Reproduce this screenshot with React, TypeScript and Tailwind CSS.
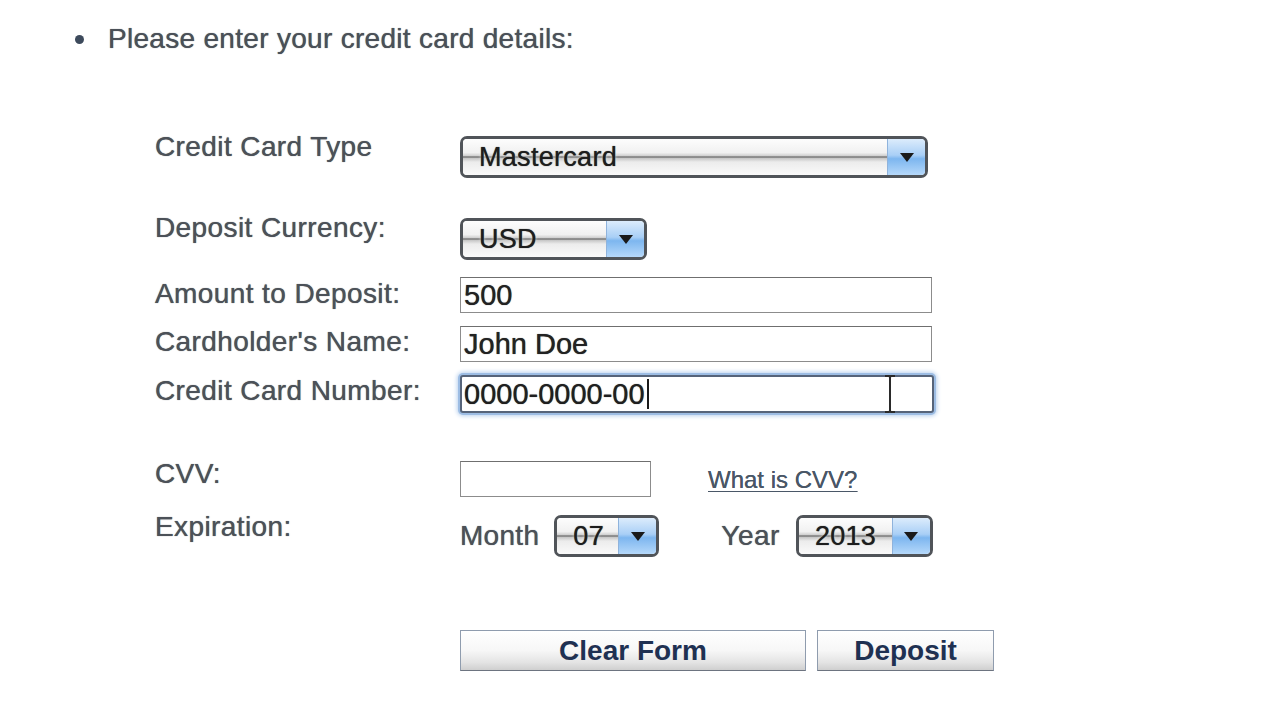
import React from "react";

const labelCls =
  "w-[305px] shrink-0 text-[28px] leading-none tracking-[0.4px] text-[#4c5158] [text-shadow:0_0_0.8px_rgba(60,65,72,0.9)]";

interface AquaSelectProps {
  value: string;
  widthCls: string;
  textPad?: string;
}

// Old Mac "Aqua" style popup: grey glossy body with a blue arrow cap
function AquaSelect({ value, widthCls, textPad = "pl-[15px]" }: AquaSelectProps) {
  return (
    <div
      className={`flex h-[42px] shrink-0 overflow-hidden rounded-[7px] border-[3px] border-[#505459] ${widthCls}`}
    >
      <div
        className={`flex flex-1 items-center bg-[linear-gradient(to_bottom,#fdfdfd_0%,#f1f1f1_38%,#d2d2d2_46%,#6e6e6e_50%,#c8c8c8_54%,#ececec_64%,#fafafa_100%)] ${textPad}`}
      >
        <span className="text-[27px] leading-none tracking-[0.3px] text-[#1d1d1d] [text-shadow:0_0_1px_#333,0_0_3px_#fff]">
          {value}
        </span>
      </div>
      <div className="flex w-[38px] items-center justify-center border-l border-[#8fb3dc] bg-[linear-gradient(to_bottom,#dcecfc_0%,#a9cff6_45%,#7db6ef_55%,#b5d8fa_100%)]">
        <svg width="14" height="9" viewBox="0 0 14 9">
          <path d="M0 0 H14 L7 9 Z" fill="#1a1a1a" />
        </svg>
      </div>
    </div>
  );
}

interface TextFieldProps {
  value?: string;
  widthCls: string;
  focused?: boolean;
}

function TextField({ value = "", widthCls, focused }: TextFieldProps) {
  if (focused) {
    return (
      <div
        className={`relative flex h-[38px] shrink-0 items-center rounded-[3px] border-2 border-[#56647a] bg-white pl-[2px] shadow-[0_0_0_2px_#9dbde4,0_0_4px_3px_#b9d1ee] ${widthCls}`}
      >
        <span className="text-[29px] leading-none text-[#1f1f1f] [text-shadow:0_0_0.8px_#333]">
          {value}
        </span>
        <span className="ml-[2px] h-[30px] w-[2px] bg-[#1a1a1a]" />
        {/* I-beam mouse pointer */}
        <svg
          className="absolute left-[421px] top-[-3px]"
          width="14"
          height="40"
          viewBox="0 0 14 40"
        >
          <path
            d="M2 2 H6 L7 3 L8 2 H12 M7 3 V37 M2 38 H6 L7 37 L8 38 H12"
            stroke="#2a2a2a"
            strokeWidth="2"
            fill="none"
          />
        </svg>
      </div>
    );
  }
  return (
    <div
      className={`flex h-[36px] shrink-0 items-center border border-[#8c8c8c] border-t-[#6f6f6f] bg-white pl-[3px] ${widthCls}`}
    >
      <span className="text-[29px] leading-none text-[#222] [text-shadow:0_0_0.8px_#333]">
        {value}
      </span>
    </div>
  );
}

function FormButton({ children, widthCls }: { children: React.ReactNode; widthCls: string }) {
  return (
    <button
      className={`flex h-[41px] items-center justify-center border border-[#8f9cae] border-b-[#6d7480] bg-[linear-gradient(to_bottom,#ffffff_0%,#f7f7f7_50%,#e4e4e4_80%,#cfcfcf_100%)] text-[28px] font-bold leading-none text-[#1f3152] ${widthCls}`}
    >
      {children}
    </button>
  );
}

export default function App() {
  return (
    <div className="min-h-[720px] w-[1280px] bg-white font-['Liberation_Sans',Arial,sans-serif]">
      {/* heading */}
      <div className="flex items-center pl-[75px] pt-[25px]">
        <span className="h-[9px] w-[9px] rounded-full bg-[#3d4a5c]" />
        <span className="ml-[24px] text-[28px] leading-none tracking-[0.3px] text-[#4a5058] [text-shadow:0_0_0.8px_rgba(60,65,72,0.9)]">
          Please enter your credit card details:
        </span>
      </div>

      <div className="mt-[80px] flex flex-col pl-[155px]">
        {/* card type */}
        <div className="flex h-[81px] items-start">
          <div className={labelCls}>Credit Card Type</div>
          <div className="mt-[3px]">
            <AquaSelect value="Mastercard" widthCls="w-[468px]" textPad="pl-[16px]" />
          </div>
        </div>

        {/* currency */}
        <div className="flex h-[63px] items-start">
          <div className={labelCls}>Deposit Currency:</div>
          <div className="mt-[4px]">
            <AquaSelect value="USD" widthCls="w-[187px]" textPad="pl-[16px]" />
          </div>
        </div>

        <div className="flex h-[49px] items-start">
          <div className={`${labelCls} mt-[3px]`}>Amount to Deposit:</div>
          <TextField value="500" widthCls="w-[472px]" />
        </div>

        <div className="flex h-[47px] items-start">
          <div className={`${labelCls} mt-[2px]`}>Cardholder's Name:</div>
          <TextField value="John Doe" widthCls="w-[472px]" />
        </div>

        <div className="flex h-[87px] items-start">
          <div className={`${labelCls} mt-[4px]`}>Credit Card Number:</div>
          <div className="mt-[2px]">
            <TextField value="0000-0000-00" widthCls="w-[474px]" focused />
          </div>
        </div>

        {/* cvv */}
        <div className="flex h-[53px] items-start">
          <div className={labelCls}>CVV:</div>
          <div className="mt-[1px] flex items-center">
            <TextField widthCls="w-[191px]" />
            <a
              href="#"
              className="ml-[57px] mt-[2px] text-[24px] leading-none text-[#4a5767] underline decoration-1 underline-offset-[3px] [text-shadow:0_0_0.6px_#4a5767]"
            >
              What is CVV?
            </a>
          </div>
        </div>

        {/* expiration */}
        <div className="flex h-[117px] items-start">
          <div className={labelCls}>Expiration:</div>
          <div className="mt-[2px] flex items-center">
            <span className="text-[28px] leading-none tracking-[0.3px] text-[#4c5158] [text-shadow:0_0_0.8px_rgba(60,65,72,0.9)]">
              Month
            </span>
            <div className="ml-[15px]">
              <AquaSelect value="07" widthCls="w-[105px]" textPad="pl-[16px]" />
            </div>
            <span className="ml-[62px] text-[28px] leading-none tracking-[0.5px] text-[#4c5158] [text-shadow:0_0_0.8px_rgba(60,65,72,0.9)]">
              Year
            </span>
            <div className="ml-[16px]">
              <AquaSelect value="2013" widthCls="w-[137px]" textPad="pl-[16px]" />
            </div>
          </div>
        </div>

        <div className="flex pl-[305px]">
          <FormButton widthCls="w-[346px]">Clear Form</FormButton>
          <div className="ml-[11px]">
            <FormButton widthCls="w-[177px]">Deposit</FormButton>
          </div>
        </div>
      </div>
    </div>
  );
}
